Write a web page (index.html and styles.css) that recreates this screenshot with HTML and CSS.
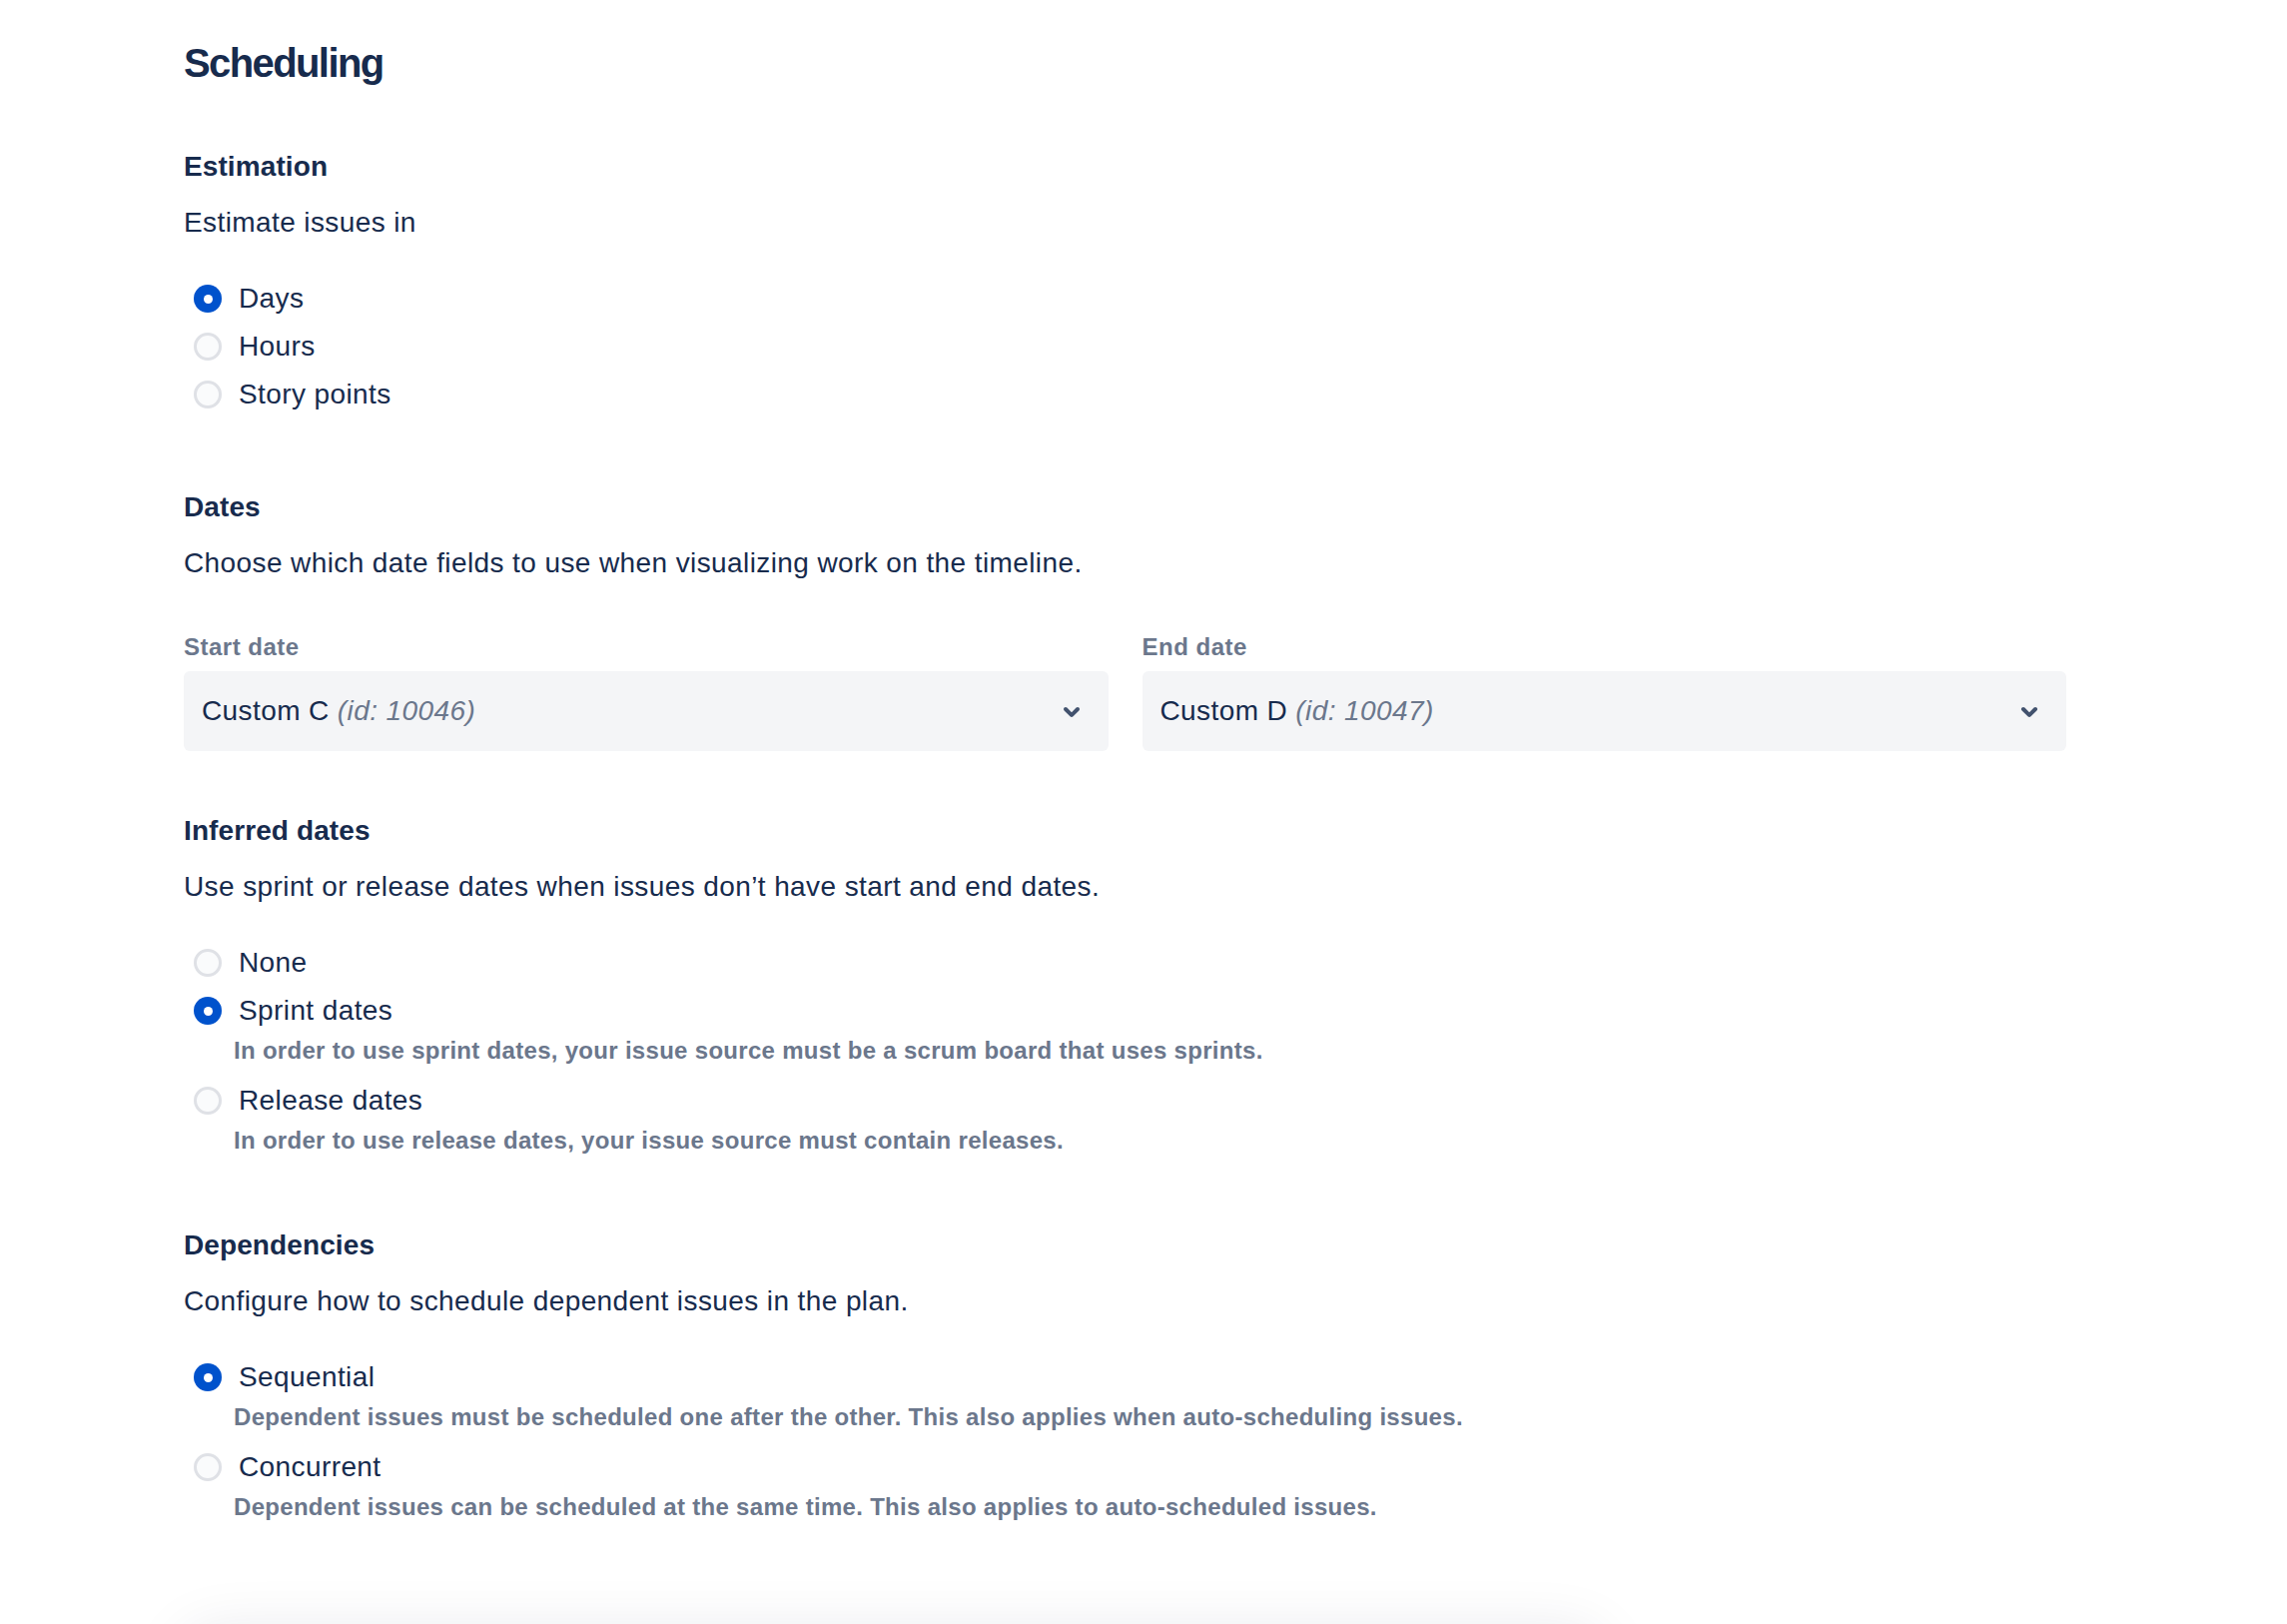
FILE: index.html
```html
<!DOCTYPE html>
<html lang="en">
  <head>
    <meta charset="UTF-8" />
    <meta name="viewport" content="width=device-width, initial-scale=1.0" />
    <title>Scheduling</title>
    <link rel="stylesheet" href="styles.css">
  </head>
  <body>
    <div class="page">
      <h1>Scheduling</h1>

      <!-- 估算 -->
      <section class="section">
        <h2>Estimation</h2>
        <p class="lead">Estimate issues in</p>
        <div class="radios radios-plain">
          <label class="radio checked"><span class="dot"></span>Days</label>
          <label class="radio"><span class="dot"></span>Hours</label>
          <label class="radio"><span class="dot"></span>Story points</label>
        </div>
      </section>

      <!-- 日期 -->
      <section class="section">
        <h2>Dates</h2>
        <p class="lead">Choose which date fields to use when visualizing work on the timeline.</p>
        <div class="fields">
          <div class="field">
            <div class="field-label">Start date</div>
            <div class="select">
              <span>Custom C <i>(id: 10046)</i></span>
              <svg class="chevron" viewBox="0 0 24 24" width="48" height="48">
                <path d="M8.292 10.293a1.009 1.009 0 0 0 0 1.419l2.939 2.965c.218.215.5.322.779.322s.556-.107.769-.322l2.93-2.955a1.01 1.01 0 0 0 0-1.419.987.987 0 0 0-1.406 0l-2.298 2.317-2.307-2.327a.99.99 0 0 0-1.406 0z" fill="currentColor"/>
              </svg>
            </div>
          </div>
          <div class="field">
            <div class="field-label">End date</div>
            <div class="select">
              <span>Custom D <i>(id: 10047)</i></span>
              <svg class="chevron" viewBox="0 0 24 24" width="48" height="48">
                <path d="M8.292 10.293a1.009 1.009 0 0 0 0 1.419l2.939 2.965c.218.215.5.322.779.322s.556-.107.769-.322l2.93-2.955a1.01 1.01 0 0 0 0-1.419.987.987 0 0 0-1.406 0l-2.298 2.317-2.307-2.327a.99.99 0 0 0-1.406 0z" fill="currentColor"/>
              </svg>
            </div>
          </div>
        </div>
      </section>

      <!-- 推断日期 -->
      <section class="section">
        <h2>Inferred dates</h2>
        <p class="lead">Use sprint or release dates when issues don’t have start and end dates.</p>
        <div class="radios radios-hints">
          <label class="radio"><span class="dot"></span>None</label>
          <label class="radio checked"><span class="dot"></span>Sprint dates</label>
          <p class="hint">In order to use sprint dates, your issue source must be a scrum board that uses sprints.</p>
          <label class="radio"><span class="dot"></span>Release dates</label>
          <p class="hint">In order to use release dates, your issue source must contain releases.</p>
        </div>
      </section>

      <!-- 依赖 -->
      <section class="section">
        <h2>Dependencies</h2>
        <p class="lead">Configure how to schedule dependent issues in the plan.</p>
        <div class="radios radios-hints">
          <label class="radio checked"><span class="dot"></span>Sequential</label>
          <p class="hint">Dependent issues must be scheduled one after the other. This also applies when auto-scheduling issues.</p>
          <label class="radio"><span class="dot"></span>Concurrent</label>
          <p class="hint">Dependent issues can be scheduled at the same time. This also applies to auto-scheduled issues.</p>
        </div>
      </section>

      <div class="footer"></div>
    </div>
  </body>
</html>
```

FILE: styles.css
```css
* {
  margin: 0;
  padding: 0;
  box-sizing: border-box;
}

body {
  background: #fff;
  color: #172b4d;
  font-family: "Liberation Sans", Arial, sans-serif;
}

.page {
  width: 2069px;
  padding: 39px 0 0 184px;
}

h1 {
  font-size: 40px;
  line-height: 48px;
  font-weight: 700;
  letter-spacing: -1.6px;
  margin-bottom: 60px;
}

h2 {
  font-size: 28px;
  line-height: 40px;
  font-weight: 700;
  letter-spacing: 0.1px;
}

.section + .section {
  margin-top: 59px;
}

.lead {
  margin-top: 16px;
  font-size: 28px;
  line-height: 40px;
  letter-spacing: 0.4px;
}

/* 单选 */
.radios {
  margin-top: 32px;
}

.radios-plain {
  padding-bottom: 10px;
}

.radios-hints {
  display: flow-root;
}

.radio {
  display: flex;
  align-items: center;
  height: 48px;
  font-size: 28px;
  letter-spacing: 0.4px;
  cursor: pointer;
}

.dot {
  display: flex;
  align-items: center;
  justify-content: center;
  width: 28px;
  height: 28px;
  margin: 0 17px 0 10px;
  border-radius: 50%;
  border: 3px solid #dfe1e6;
  background: #fafbfc;
}

.radio.checked .dot {
  border: 0;
  background: #0052cc;
}

.radio.checked .dot::after {
  content: "";
  width: 9px;
  height: 9px;
  border-radius: 50%;
  background: #fff;
}

.hint {
  margin: 0 0 10px 50px;
  font-size: 24px;
  line-height: 32px;
  font-weight: 700;
  letter-spacing: 0.3px;
  color: #6b778c;
}

/* 日期字段 */
.fields {
  display: grid;
  grid-template-columns: 1fr 1fr;
  gap: 34px;
  margin-top: 48px;
  padding-bottom: 1px;
}

.field-label {
  font-size: 24px;
  line-height: 32px;
  font-weight: 700;
  letter-spacing: 0.5px;
  color: #6b778c;
  margin-bottom: 8px;
}

.select {
  display: flex;
  align-items: center;
  justify-content: space-between;
  height: 80px;
  padding: 0 13px 0 18px;
  border-radius: 6px;
  background: #f4f5f7;
  font-size: 28px;
  letter-spacing: 0.4px;
}

.select i {
  color: #6b778c;
}

.chevron {
  color: #42526e;
}

.footer {
  width: 1420px;
  height: 80px;
  margin-top: 100px;
  border-radius: 30px;
  box-shadow: 0 0 60px rgba(9, 30, 66, 0.1);
}
```
